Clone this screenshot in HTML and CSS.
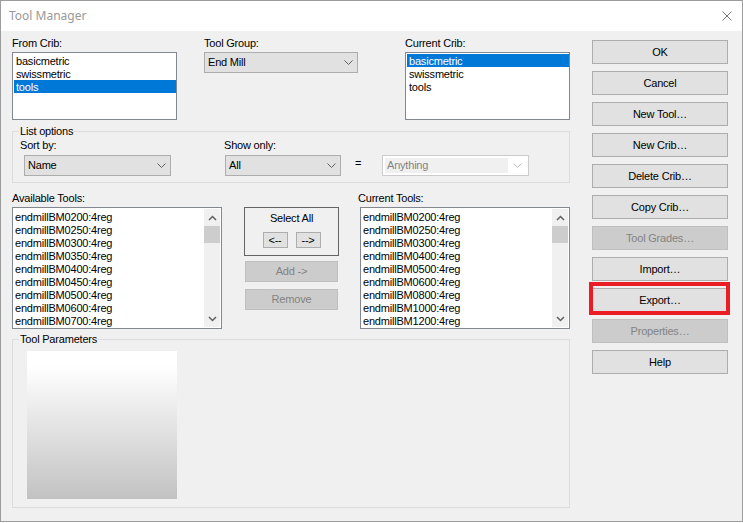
FILE: index.html
```html
<!DOCTYPE html>
<html lang="en">
<head>
  <meta charset="UTF-8" />
  <title>Tool Manager</title>
  <link rel="stylesheet" href="styles.css">
</head>
<body>

<div class="window">
  <!-- Title bar -->
  <div class="titlebar">
    <span class="title">Tool Manager</span>
    <svg class="close" width="10" height="10" viewBox="0 0 10 10">
      <path d="M0.5 0.5 L9.5 9.5 M9.5 0.5 L0.5 9.5" stroke="#777" stroke-width="1" fill="none" />
    </svg>
  </div>

  <div class="dialog">
    <div class="main">

      <!-- Cribs + tool group -->
      <div class="crib-row">
        <div class="from-crib">
          <label>From Crib:</label>
          <ul class="listbox">
            <li>basicmetric</li>
            <li>swissmetric</li>
            <li class="selected">tools</li>
          </ul>
        </div>
        <div class="tool-group">
          <label>Tool Group:</label>
          <div class="combo">
            <span>End Mill</span>
            <svg width="9" height="5" viewBox="0 0 9 5"><path d="M0.5 0.5 L4.5 4.5 L8.5 0.5" stroke="#606060" fill="none" /></svg>
          </div>
        </div>
        <div class="current-crib">
          <label>Current Crib:</label>
          <ul class="listbox">
            <li class="selected">basicmetric</li>
            <li>swissmetric</li>
            <li>tools</li>
          </ul>
        </div>
      </div>

      <!-- List options -->
      <fieldset class="group list-options">
        <legend>List options</legend>
        <div class="options-row">
          <div class="sort-by">
            <label>Sort by:</label>
            <div class="combo">
              <span>Name</span>
              <svg width="9" height="5" viewBox="0 0 9 5"><path d="M0.5 0.5 L4.5 4.5 L8.5 0.5" stroke="#606060" fill="none" /></svg>
            </div>
          </div>
          <div class="show-only">
            <label>Show only:</label>
            <div class="combo">
              <span>All</span>
              <svg width="9" height="5" viewBox="0 0 9 5"><path d="M0.5 0.5 L4.5 4.5 L8.5 0.5" stroke="#606060" fill="none" /></svg>
            </div>
          </div>
          <span class="equals">=</span>
          <div class="combo-disabled">
            <span class="combo-field">Anything</span>
            <span class="combo-arrow">
              <svg width="9" height="5" viewBox="0 0 9 5"><path d="M0.5 0.5 L4.5 4.5 L8.5 0.5" stroke="#bfbfbf" fill="none" /></svg>
            </span>
          </div>
        </div>
      </fieldset>

      <!-- Tools lists -->
      <div class="tools-row">
        <div class="available">
          <label>Available Tools:</label>
          <div class="tool-list">
            <ul>
              <li>endmillBM0200:4reg</li>
              <li>endmillBM0250:4reg</li>
              <li>endmillBM0300:4reg</li>
              <li>endmillBM0350:4reg</li>
              <li>endmillBM0400:4reg</li>
              <li>endmillBM0450:4reg</li>
              <li>endmillBM0500:4reg</li>
              <li>endmillBM0600:4reg</li>
              <li>endmillBM0700:4reg</li>
            </ul>
            <div class="scrollbar">
              <span class="sb-arrow"><svg width="9" height="6" viewBox="0 0 9 6"><path d="M1 5 L4.5 1.5 L8 5" stroke="#606060" stroke-width="1.5" fill="none" /></svg></span>
              <span class="sb-thumb"></span>
              <span class="sb-track"></span>
              <span class="sb-arrow"><svg width="9" height="6" viewBox="0 0 9 6"><path d="M1 1 L4.5 4.5 L8 1" stroke="#606060" stroke-width="1.5" fill="none" /></svg></span>
            </div>
          </div>
        </div>

        <div class="transfer">
          <div class="select-all">
            <span>Select All</span>
            <div class="arrows">
              <button class="arrow-btn">&lt;--</button>
              <button class="arrow-btn">--&gt;</button>
            </div>
          </div>
          <button class="btn disabled add-btn">Add -&gt;</button>
          <button class="btn disabled remove-btn">Remove</button>
        </div>

        <div class="current-tools">
          <label>Current Tools:</label>
          <div class="tool-list">
            <ul>
              <li>endmillBM0200:4reg</li>
              <li>endmillBM0250:4reg</li>
              <li>endmillBM0300:4reg</li>
              <li>endmillBM0400:4reg</li>
              <li>endmillBM0500:4reg</li>
              <li>endmillBM0600:4reg</li>
              <li>endmillBM0800:4reg</li>
              <li>endmillBM1000:4reg</li>
              <li>endmillBM1200:4reg</li>
            </ul>
            <div class="scrollbar">
              <span class="sb-arrow"><svg width="9" height="6" viewBox="0 0 9 6"><path d="M1 5 L4.5 1.5 L8 5" stroke="#606060" stroke-width="1.5" fill="none" /></svg></span>
              <span class="sb-thumb"></span>
              <span class="sb-track"></span>
              <span class="sb-arrow"><svg width="9" height="6" viewBox="0 0 9 6"><path d="M1 1 L4.5 4.5 L8 1" stroke="#606060" stroke-width="1.5" fill="none" /></svg></span>
            </div>
          </div>
        </div>
      </div>

      <!-- Tool parameters -->
      <fieldset class="group tool-params">
        <legend>Tool Parameters</legend>
        <div class="preview"></div>
      </fieldset>
    </div>

    <!-- Dialog buttons -->
    <div class="buttons">
      <button class="btn">OK</button>
      <button class="btn">Cancel</button>
      <button class="btn">New Tool…</button>
      <button class="btn">New Crib…</button>
      <button class="btn">Delete Crib…</button>
      <button class="btn">Copy Crib…</button>
      <button class="btn disabled">Tool Grades…</button>
      <button class="btn">Import…</button>
      <button class="btn export">Export…</button>
      <button class="btn disabled">Properties…</button>
      <button class="btn">Help</button>
    </div>
  </div>
</div>

</body>
</html>
```

FILE: styles.css
```css
/* General */
body {
  margin: 0;
  background: #fff;
  font-family: "Liberation Sans", Arial, sans-serif;
  font-size: 11px;
  line-height: 13px;
  letter-spacing: -0.2px;
  color: #000;
}

.window {
  width: 743px;
  height: 522px;
  box-sizing: border-box;
  border: 1px solid #9c9c9c;
  background: #f0f0f0;
  display: flex;
  flex-direction: column;
}

/* Title bar */
.titlebar {
  height: 30px;
  flex: none;
  background: #fff;
  display: flex;
  align-items: center;
  justify-content: space-between;
  padding: 0 10px 1px 8px;
  box-sizing: border-box;
}

.title {
  font-family: "Noto Sans", sans-serif;
  font-size: 12px;
  letter-spacing: 0;
  color: #999;
}

/* Layout */
.dialog {
  display: flex;
  padding: 6px 0 0 11px;
}

.main {
  width: 558px;
}

label {
  display: block;
  margin-bottom: 2px;
}

/* Crib row */
.crib-row {
  display: flex;
}

.from-crib {
  width: 165px;
}

.tool-group {
  width: 154px;
  margin-left: 27px;
}

.current-crib {
  width: 165px;
  margin-left: 47px;
}

.listbox {
  list-style: none;
  margin: 0;
  padding: 1px 0 1px 1px;
  height: 68px;
  box-sizing: border-box;
  border: 1px solid #828790;
  background: #fff;
}

.listbox li {
  height: 13px;
  box-sizing: border-box;
  padding: 1px 0 0 2px;
}

.listbox li.selected {
  background: #0078d7;
  color: #fff;
}

/* Combo boxes */
.combo {
  height: 21px;
  box-sizing: border-box;
  border: 1px solid #adadad;
  background: #e1e1e1;
  display: flex;
  align-items: center;
  justify-content: space-between;
  padding: 0 4px 0 3px;
}

.combo svg {
  display: block;
}

.combo-disabled {
  width: 147px;
  height: 21px;
  box-sizing: border-box;
  border: 1px solid #cccccc;
  background: #fff;
  padding: 2px;
  display: flex;
}

.combo-field {
  flex: 1;
  background: #f0f0f0;
  color: #838383;
  line-height: 15px;
  padding-left: 2px;
}

.combo-arrow {
  width: 18px;
  display: flex;
  align-items: center;
  justify-content: center;
}

/* Group boxes */
.group {
  margin: 0;
  min-width: 0;
  border: 1px solid #dcdcdc;
}

.group legend {
  padding: 0 1px;
}

.list-options {
  margin-top: 5px;
  padding: 1px 0 6px 6px;
}

.options-row {
  display: flex;
  align-items: flex-end;
  padding-left: 1px;
}

.options-row label {
  margin-bottom: 3px;
}

.sort-by {
  width: 151px;
}

.sort-by .combo {
  width: 147px;
  margin-left: 4px;
}

.show-only {
  width: 117px;
  margin-left: 53px;
}

.show-only .combo {
  width: 116px;
  margin-left: 1px;
}

.equals {
  width: 27px;
  height: 21px;
  line-height: 17px;
  margin-left: 14px;
}

/* Tool lists */
.tools-row {
  display: flex;
  margin-top: 9px;
}

.available {
  width: 210px;
}

.current-tools {
  width: 212px;
  margin-left: 19px;
}

.current-tools .tool-list {
  margin-left: 2px;
}

.tool-list {
  display: flex;
  height: 122px;
  box-sizing: border-box;
  border: 1px solid #828790;
  padding: 1px;
  background: #fff;
}

.tool-list ul {
  flex: 1;
  list-style: none;
  margin: 0;
  padding: 2px 0 0;
  overflow: hidden;
}

.tool-list li {
  height: 13px;
  padding-left: 1px;
  white-space: nowrap;
}

.scrollbar {
  width: 16px;
  background: #f0f0f0;
  display: flex;
  flex-direction: column;
}

.sb-arrow {
  height: 17px;
  display: flex;
  align-items: center;
  justify-content: center;
}

.sb-thumb {
  height: 17px;
  background: #cdcdcd;
}

.sb-track {
  flex: 1;
}

/* Transfer controls */
.transfer {
  width: 95px;
  margin-left: 22px;
  padding-top: 15px;
  display: flex;
  flex-direction: column;
  align-items: center;
}

.select-all {
  width: 95px;
  height: 49px;
  box-sizing: border-box;
  border: 1px solid #646464;
  padding-top: 4px;
  text-align: center;
}

.arrows {
  display: flex;
  justify-content: center;
  gap: 8px;
  margin-top: 7px;
}

.arrow-btn {
  width: 25px;
  height: 16px;
  padding: 0;
  font: inherit;
  letter-spacing: inherit;
  line-height: 14px;
  color: #000;
  border: 1px solid #adadad;
  background: #e1e1e1;
}

.transfer .btn {
  width: 93px;
  height: 21px;
}

.add-btn {
  margin-top: 5px;
}

.remove-btn {
  margin-top: 7px;
}

/* Tool parameters */
.tool-params {
  margin-top: 4px;
  padding: 5px 0 8px 6px;
}

.preview {
  width: 150px;
  height: 148px;
  margin-left: 8px;
  background: linear-gradient(#fff 10%, #c2c2c2);
}

/* Buttons column */
.buttons {
  width: 136px;
  margin-left: 22px;
  padding-top: 3px;
  display: flex;
  flex-direction: column;
  gap: 7px;
}

.btn {
  height: 24px;
  box-sizing: border-box;
  padding: 0;
  border: 1px solid #adadad;
  background: #e1e1e1;
  font: inherit;
  letter-spacing: inherit;
  color: #000;
}

.btn.disabled {
  background: #cccccc;
  border-color: #bfbfbf;
  color: #838383;
}

/* Red highlight around Export */
.export {
  position: relative;
}

.export::after {
  content: "";
  position: absolute;
  left: -4px;
  top: -7px;
  right: -3px;
  bottom: -4px;
  border: 4px solid #ec1c24;
}
```
